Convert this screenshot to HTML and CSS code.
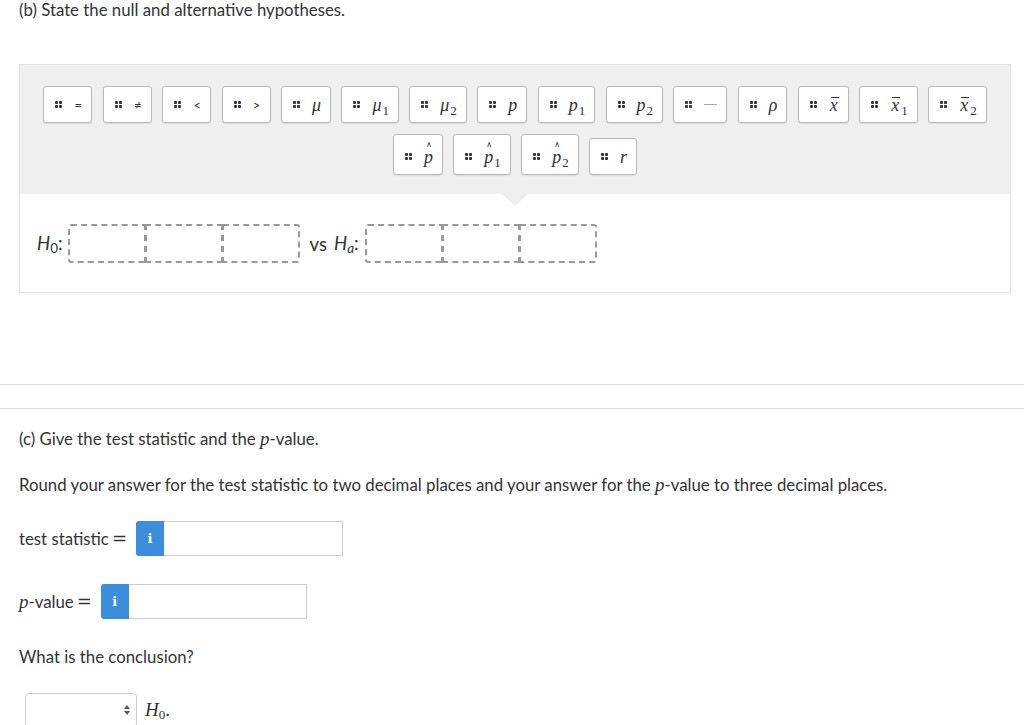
FILE: index.html
```html
<!DOCTYPE html>
<html lang="en">
<head>
    <meta charset="UTF-8">
    <title>Hypothesis test</title>
    <link rel="stylesheet" href="styles.css">
</head>
<body>

<p class="part">(b) State the null and alternative hypotheses.</p>

<div class="hyp">
    <div class="palette">
        <div class="keys">
            <span class="key"><span class="grip"></span><span class="rel">=</span></span>
            <span class="key"><span class="grip"></span><span class="rel">&ne;</span></span>
            <span class="key"><span class="grip"></span><span class="rel">&lt;</span></span>
            <span class="key"><span class="grip"></span><span class="rel">&gt;</span></span>
            <span class="key"><span class="grip"></span><span class="m">&mu;</span></span>
            <span class="key"><span class="grip"></span><span class="m">&mu;<sub>1</sub></span></span>
            <span class="key"><span class="grip"></span><span class="m">&mu;<sub>2</sub></span></span>
            <span class="key"><span class="grip"></span><span class="m">p</span></span>
            <span class="key"><span class="grip"></span><span class="m">p<sub>1</sub></span></span>
            <span class="key"><span class="grip"></span><span class="m">p<sub>2</sub></span></span>
            <span class="key"><span class="grip"></span><span class="dash"></span></span>
            <span class="key"><span class="grip"></span><span class="m">&rho;</span></span>
            <span class="key"><span class="grip"></span><span class="m"><span class="bar">x</span></span></span>
            <span class="key"><span class="grip"></span><span class="m"><span class="bar">x</span><sub>1</sub></span></span>
            <span class="key"><span class="grip"></span><span class="m"><span class="bar">x</span><sub>2</sub></span></span>
        </div>
        <div class="keys">
            <span class="key tall"><span class="grip"></span><span class="m"><span class="hat">p</span></span></span>
            <span class="key tall"><span class="grip"></span><span class="m"><span class="hat">p</span><sub>1</sub></span></span>
            <span class="key tall"><span class="grip"></span><span class="m"><span class="hat">p</span><sub>2</sub></span></span>
            <span class="key"><span class="grip"></span><span class="m">r</span></span>
        </div>
    </div>

    <div class="answer">
        <span class="hlabel"><i>H</i><sub>0</sub>:</span>
        <span class="slots">
            <span class="slot"></span><span class="slot"></span><span class="slot"></span>
        </span>
        <span class="vs">vs</span>
        <span class="hlabel"><i>H</i><sub><i>a</i></sub>:</span>
        <span class="slots">
            <span class="slot"></span><span class="slot"></span><span class="slot"></span>
        </span>
    </div>
</div>

<hr class="rule first">
<hr class="rule">

<p class="part">(c) Give the test statistic and the <i class="mv">p</i>-value.</p>

<p class="part note">Round your answer for the test statistic to two decimal places and your answer for the <i class="mv">p</i>-value to three decimal places.</p>

<div class="field stat">
    <span class="flabel">test statistic<span class="eq">=</span></span>
    <span class="info">i</span>
    <span class="input"></span>
</div>

<div class="field pval">
    <span class="flabel"><i class="mv">p</i>-value<span class="eq">=</span></span>
    <span class="info">i</span>
    <span class="input"></span>
</div>

<p class="part ask">What is the conclusion?</p>

<div class="conclusion">
    <span class="select"><span class="arrows"><span class="up"></span><span class="down"></span></span></span>
    <span class="h0"><i>H</i><sub>0</sub>.</span>
</div>

</body>
</html>
```

FILE: styles.css
```css
body {
    margin: 0;
    font-family: Lato, "Open Sans", sans-serif;
    font-size: 16.8px;
    color: #333;
    background: #fff;
}

.part {
    margin: 0;
    padding-left: 19px;
    line-height: 20px;
}

/* hypothesis drag & drop widget */
.hyp {
    margin: 44px 13px 0 19px;
    border: 1px solid #e3e3e3;
}

.palette {
    position: relative;
    background: #efefef;
    padding: 21px 0 19px;
    display: flex;
    flex-direction: column;
    align-items: center;
    gap: 11px;
}

/* little pointer under the palette */
.palette::after {
    content: "";
    position: absolute;
    left: 50%;
    bottom: -12px;
    transform: translateX(-50%);
    border-left: 13px solid transparent;
    border-right: 13px solid transparent;
    border-top: 12px solid #efefef;
}

.keys {
    display: flex;
    align-items: flex-end;
    gap: 10.4px;
}

.key {
    display: inline-flex;
    align-items: center;
    height: 37px;
    box-sizing: border-box;
    padding: 0 9px 0 11px;
    background: #fff;
    border: 1px solid #b8b8b8;
    border-radius: 3px;
    box-shadow: 0 1px 1px rgba(0, 0, 0, 0.08);
}

.key.tall {
    height: 41px;
    padding-top: 4px;
}

/* 2x2 drag handle */
.grip {
    position: relative;
    width: 7px;
    height: 7px;
    margin-right: 12px;
    flex-shrink: 0;
}

.grip::before {
    content: "";
    position: absolute;
    left: 0;
    top: 0;
    width: 3px;
    height: 3px;
    border-radius: 1px;
    background: #333;
    box-shadow: 4px 0 #333, 0 4px #333, 4px 4px #333;
}

.rel {
    font-size: 13px;
    width: 8px;
    text-align: center;
}

.dash {
    width: 13px;
    height: 1px;
    background: #aaa;
}

.m {
    font-family: "Liberation Serif", "DejaVu Serif", serif;
    font-style: italic;
    font-size: 18px;
    line-height: 20px;
    white-space: nowrap;
}

.m sub {
    font-style: normal;
    font-size: 13px;
    line-height: 0;
    vertical-align: -4px;
    margin-left: 1px;
}

/* x-bar */
.bar {
    position: relative;
    padding: 0 1px;
}

.bar::before {
    content: "";
    position: absolute;
    left: 2px;
    right: 0;
    top: 2px;
    border-top: 1px solid #333;
}

/* p-hat */
.hat {
    position: relative;
}

.hat::before {
    content: "\2227";
    position: absolute;
    left: 2px;
    top: -6px;
    font-family: "DejaVu Sans", sans-serif;
    font-style: normal;
    font-size: 8px;
    line-height: 8px;
}

.answer {
    display: flex;
    align-items: center;
    padding: 30px 17px 29px;
    background: #fff;
}

.hlabel {
    font-size: 18.5px;
    margin-right: 5px;
}

.hlabel sub {
    font-size: 13.5px;
    vertical-align: -3px;
    line-height: 1;
}

.slots {
    display: flex;
}

.slot {
    width: 78px;
    height: 39px;
    box-sizing: border-box;
    border: 2px dashed #999;
}

.slot + .slot {
    margin-left: -1px;
}

.slot:first-child {
    border-radius: 3px 0 0 3px;
}

.slot:last-child {
    border-radius: 0 3px 3px 0;
}

.vs {
    font-size: 18.5px;
    margin: 0 7px 0 10px;
}

.vs + .hlabel {
    margin-right: 6px;
}

/* page dividers */
.rule {
    border: 0;
    border-top: 1px solid #ddd;
    margin: 0;
}

.rule.first {
    margin-top: 91px;
    margin-bottom: 23px;
}

.rule + .part {
    margin-top: 20px;
}

.mv {
    font-family: "Liberation Serif", serif;
    font-size: 19px;
}

.note {
    margin-top: 26px;
}

.field {
    display: flex;
    align-items: center;
    padding-left: 19px;
    height: 35px;
}

.stat {
    margin-top: 26px;
}

.pval {
    margin-top: 28px;
}

.flabel {
    margin-right: 9px;
}

.eq {
    font-family: "DejaVu Serif", serif;
    font-size: 18px;
    margin-left: 3px;
}

.info {
    width: 28px;
    height: 35px;
    box-sizing: border-box;
    background: #3b8edb;
    border-radius: 3px 0 0 3px;
    color: #fff;
    font-family: "DejaVu Serif", serif;
    font-weight: bold;
    font-size: 13px;
    display: flex;
    align-items: center;
    justify-content: center;
}

.input {
    height: 35px;
    box-sizing: border-box;
    border: 1px solid #ccc;
    border-left: 0;
    width: 179px;
}

.pval .input {
    width: 178px;
}

.ask {
    margin-top: 28px;
}

.conclusion {
    display: flex;
    align-items: center;
    margin-top: 26px;
    padding-left: 25px;
}

.select {
    width: 112px;
    height: 34px;
    box-sizing: border-box;
    border: 1px solid #ccc;
    border-radius: 4px;
    display: flex;
    align-items: center;
    justify-content: flex-end;
    padding-right: 6px;
}

.arrows {
    display: flex;
    flex-direction: column;
    gap: 2px;
}

.up, .down {
    width: 0;
    height: 0;
    border-left: 3px solid transparent;
    border-right: 3px solid transparent;
}

.up {
    border-bottom: 4px solid #555;
}

.down {
    border-top: 4px solid #555;
}

.h0 {
    font-family: "Liberation Serif", serif;
    font-size: 19px;
    margin-left: 8px;
}

.h0 sub {
    font-size: 13px;
    vertical-align: -3px;
    line-height: 1;
}
```
